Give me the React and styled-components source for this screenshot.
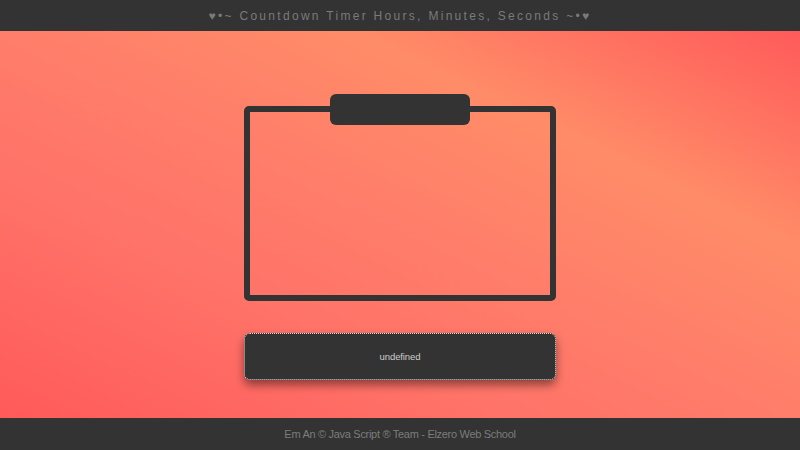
import styled, { createGlobalStyle } from "styled-components";

const GlobalStyle = createGlobalStyle`
  * { box-sizing: border-box; }
  html, body { margin: 0; padding: 0; height: 100%; }
  body { font-family: "Liberation Sans", Arial, sans-serif; }
  #root { height: 100%; }
`;

const Page = styled.div`
  display: flex;
  flex-direction: column;
  height: 100vh;
`;

const Header = styled.header`
  height: 31px;
  background: #333;
  color: #7a7a7a;
  display: flex;
  align-items: center;
  justify-content: center;
  font-size: 12px;
  letter-spacing: 2.3px;
`;

const Main = styled.main`
  flex: 1;
  background: linear-gradient(
    to top right,
    #ff5a5a 0%,
    #ff7268 30%,
    #ff7d6a 50%,
    #ff8c68 72%,
    #ff5a5a 100%
  );
  display: flex;
  flex-direction: column;
  align-items: center;
  padding-top: 63px;
`;

const Clock = styled.div`
  position: relative;
  padding-top: 12px;
`;

const Frame = styled.div`
  width: 312px;
  height: 195px;
  border: 6px solid #333;
  border-radius: 5px;
`;

const Tab = styled.div`
  position: absolute;
  top: 0;
  left: 50%;
  transform: translateX(-50%);
  width: 140px;
  height: 31px;
  background: #333;
  border-radius: 6px;
`;

const Output = styled.div`
  margin-top: 32px;
  width: 312px;
  height: 47px;
  background: #333;
  border: 1px dotted #ddd;
  border-radius: 6px;
  box-shadow: 0 5px 10px rgba(0, 0, 0, 0.45);
  color: #ccc;
  font-size: 9.5px;
  letter-spacing: -0.1px;
  display: flex;
  align-items: center;
  justify-content: center;
`;

const Footer = styled.footer`
  height: 32px;
  background: #333;
  color: #7c7c7c;
  font-size: 11px;
  letter-spacing: -0.3px;
  display: flex;
  align-items: center;
  justify-content: center;
`;

export default function App() {
  return (
    <Page>
      <GlobalStyle />
      <Header>♥•~ Countdown Timer Hours, Minutes, Seconds ~•♥</Header>
      <Main>
        <Clock>
          <Tab />
          <Frame />
        </Clock>
        <Output>undefined</Output>
      </Main>
      <Footer>Em An © Java Script ® Team - Elzero Web School</Footer>
    </Page>
  );
}
